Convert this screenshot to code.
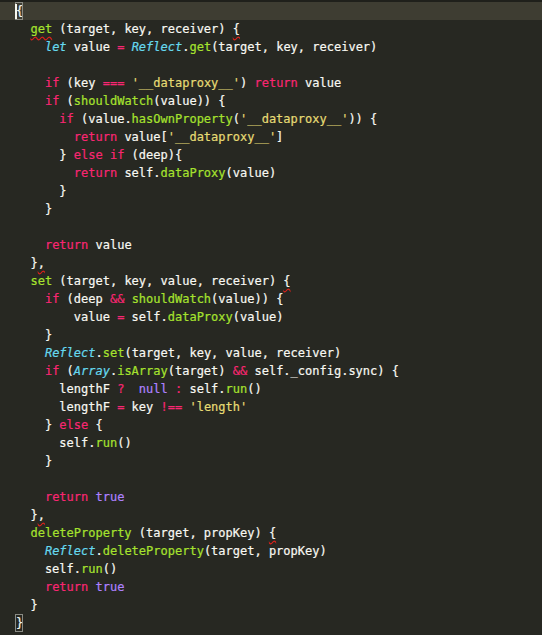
import React from 'react';

type Tok = [string, string?];

const K = 'text-[#f92672]';
const F = 'text-[#a6e22e]';
const S = 'text-[#e6db74]';
const C = 'text-[#66d9ef] italic';
const N = 'text-[#ae81ff]';
const W = 'underline decoration-wavy decoration-[#e0201a] underline-offset-[3px]';

const lines: Tok[][] = [
  [['{', 'brace']],
  [['  '], ['get', F + ' ' + W], [' (target, key, receiver) '], ['{', W]],
  [['    '], ['let', C], [' value '], ['=', K], [' '], ['Reflect', C], ['.'], ['get', F], ['(target, key, receiver)']],
  [],
  [['    '], ['if', K], [' (key '], ['===', K], [' '], ["'__dataproxy__'", S], [') '], ['return', K], [' value']],
  [['    '], ['if', K], [' ('], ['shouldWatch', F], ['(value)) {']],
  [['      '], ['if', K], [' (value.'], ['hasOwnProperty', F], ['('], ["'__dataproxy__'", S], [')) {']],
  [['        '], ['return', K], [' value['], ["'__dataproxy__'", S], [']']],
  [['      } '], ['else', K], [' '], ['if', K], [' (deep){']],
  [['        '], ['return', K], [' self.'], ['dataProxy', F], ['(value)']],
  [['      }']],
  [['    }']],
  [],
  [['    '], ['return', K], [' value']],
  [['  }'], [',', W]],
  [['  '], ['set', F], [' (target, key, value, receiver) '], ['{', W]],
  [['    '], ['if', K], [' (deep '], ['&&', K], [' '], ['shouldWatch', F], ['(value)) {']],
  [['        value '], ['=', K], [' self.'], ['dataProxy', F], ['(value)']],
  [['    }']],
  [['    '], ['Reflect', C], ['.'], ['set', F], ['(target, key, value, receiver)']],
  [['    '], ['if', K], [' ('], ['Array', C], ['.'], ['isArray', F], ['(target) '], ['&&', K], [' self._config.sync) {']],
  [['      lengthF '], ['?', K], ['  '], ['null', N], [' '], [':', K], [' self.'], ['run', F], ['()']],
  [['      lengthF '], ['=', K], [' key '], ['!==', K], [' '], ["'length'", S]],
  [['    } '], ['else', K], [' {']],
  [['      self.'], ['run', F], ['()']],
  [['    }']],
  [],
  [['    '], ['return', K], [' '], ['true', N]],
  [['  }'], [',', W]],
  [['  '], ['deleteProperty', F], [' (target, propKey) '], ['{', W]],
  [['    '], ['Reflect', C], ['.'], ['deleteProperty', F], ['(target, propKey)']],
  [['    self.'], ['run', F], ['()']],
  [['    '], ['return', K], [' '], ['true', N]],
  [['  }']],
  [['}', 'brace']],
];

export default function App() {
  return (
    <div className="w-[542px] h-[635px] overflow-hidden bg-[#272822] font-['DejaVu_Sans_Mono',monospace] text-[12px] text-[#f8f8f2] [-webkit-text-stroke:0.2px]">
      <div className="h-[2px] bg-[#1f201b]" />
      {lines.map((line, i) => (
        <div
          key={i}
          className={`relative h-[18px] leading-[18px] whitespace-pre pl-[16px] ${i === 0 ? 'bg-[#3e3d32]' : ''}`}
        >
          {line.map((t, j) =>
            t[1] === 'brace' ? (
              <span key={j} className="relative inline-block">
                <span className="absolute left-[-1px] top-0 w-[8px] h-[18px] border border-[#8a8b84]" />
                {t[0]}
              </span>
            ) : (
              <span key={j} className={t[1]}>
                {t[0]}
              </span>
            )
          )}
          {i === 0 && <span className="absolute left-[15px] top-[2px] w-[2px] h-[15px] bg-[#f8f8f0]" />}
        </div>
      ))}
    </div>
  );
}
